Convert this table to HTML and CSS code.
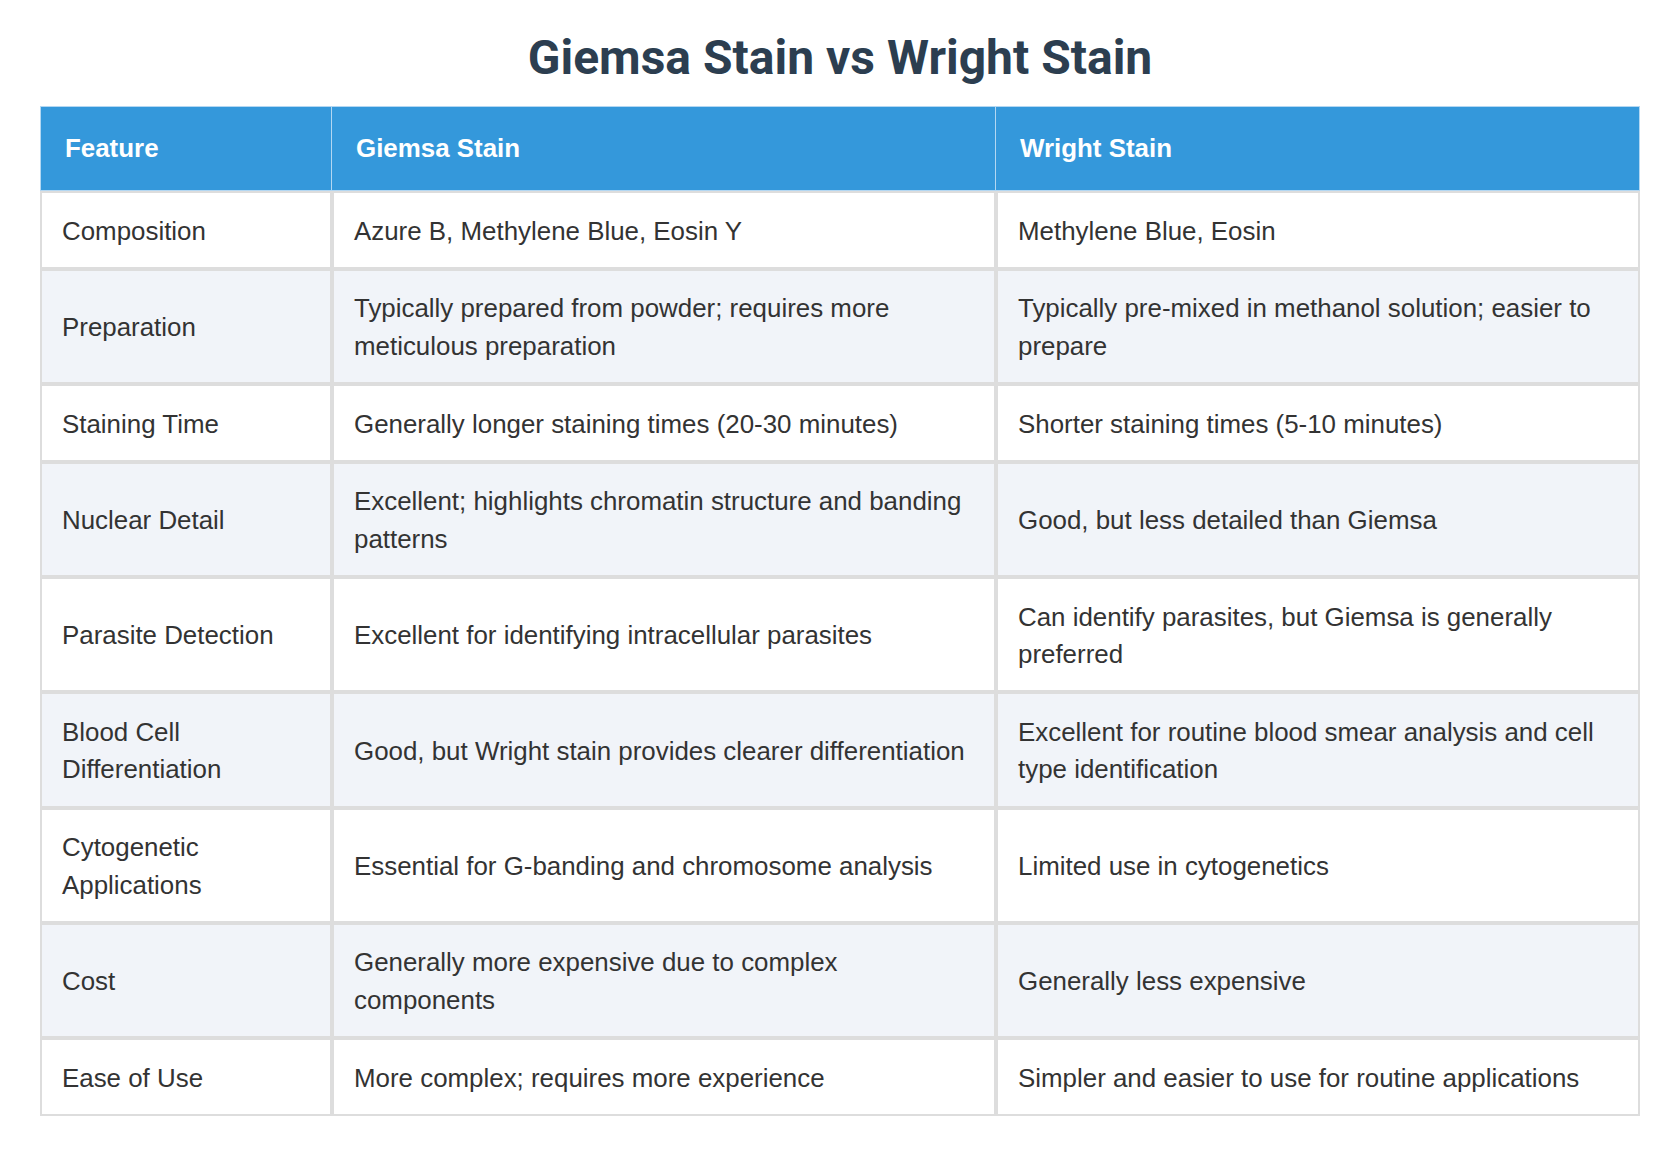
FILE: index.html
```html
<!DOCTYPE html>
<html lang="en">
<head>
<meta charset="utf-8">
<title>Giemsa Stain vs Wright Stain</title>
<link rel="stylesheet" href="styles.css">
</head>
<body>
<h1 class="title">Giemsa Stain vs Wright Stain</h1>
<table class="compare">
  <colgroup>
    <col class="c1"><col class="c2"><col class="c3">
  </colgroup>
  <thead>
    <tr><th>Feature</th><th>Giemsa Stain</th><th>Wright Stain</th></tr>
  </thead>
  <tbody>
    <tr><td>Composition</td><td>Azure B, Methylene Blue, Eosin Y</td><td>Methylene Blue, Eosin</td></tr>
    <tr><td>Preparation</td><td>Typically prepared from powder; requires more meticulous preparation</td><td>Typically pre-mixed in methanol solution; easier to prepare</td></tr>
    <tr><td>Staining Time</td><td>Generally longer staining times (20-30 minutes)</td><td>Shorter staining times (5-10 minutes)</td></tr>
    <tr><td>Nuclear Detail</td><td>Excellent; highlights chromatin structure and banding patterns</td><td>Good, but less detailed than Giemsa</td></tr>
    <tr><td>Parasite Detection</td><td>Excellent for identifying intracellular parasites</td><td>Can identify parasites, but Giemsa is generally preferred</td></tr>
    <tr><td>Blood Cell Differentiation</td><td>Good, but Wright stain provides clearer differentiation</td><td>Excellent for routine blood smear analysis and cell type identification</td></tr>
    <tr><td>Cytogenetic Applications</td><td>Essential for G-banding and chromosome analysis</td><td>Limited use in cytogenetics</td></tr>
    <tr><td>Cost</td><td>Generally more expensive due to complex components</td><td>Generally less expensive</td></tr>
    <tr><td>Ease of Use</td><td>More complex; requires more experience</td><td>Simpler and easier to use for routine applications</td></tr>
  </tbody>
</table>
</body>
</html>
```

FILE: styles.css
```css
html, body {
  margin: 0;
  background: #ffffff;
}

body {
  padding: 30px 40px;
  font-family: "Liberation Sans", Arial, sans-serif;
  color: #333333;
}

.title {
  margin: 0 0 20px;
  font-family: Roboto, "Liberation Sans", sans-serif;
  font-weight: 700;
  font-size: 48px;
  line-height: 56px;
  color: #2c3e50;
  text-align: center;
}

.compare {
  width: 1600px;
  table-layout: fixed;
  border-collapse: separate;
  border-spacing: 0;
}

.c1 { width: 292px; }
.c2 { width: 664px; }
.c3 { width: 644px; }

.compare th {
  background: #3498db;
  color: #ffffff;
  font-weight: 700;
  font-size: 25.9px;
  line-height: 35px;
  text-align: left;
  padding: 24px 24px;
  border: 1px solid #b3d7f2;
  border-left-width: 0;
}

.compare th:first-child {
  border-left-width: 1px;
}

.compare td {
  font-size: 25.9px;
  line-height: 37.5px;
  padding: 19.5px 20px 16.75px;
  border: 2px solid #dddddd;
  vertical-align: middle;
  color: #333333;
}

.compare tbody tr:nth-child(even) td {
  background: #f1f4f9;
}
```
